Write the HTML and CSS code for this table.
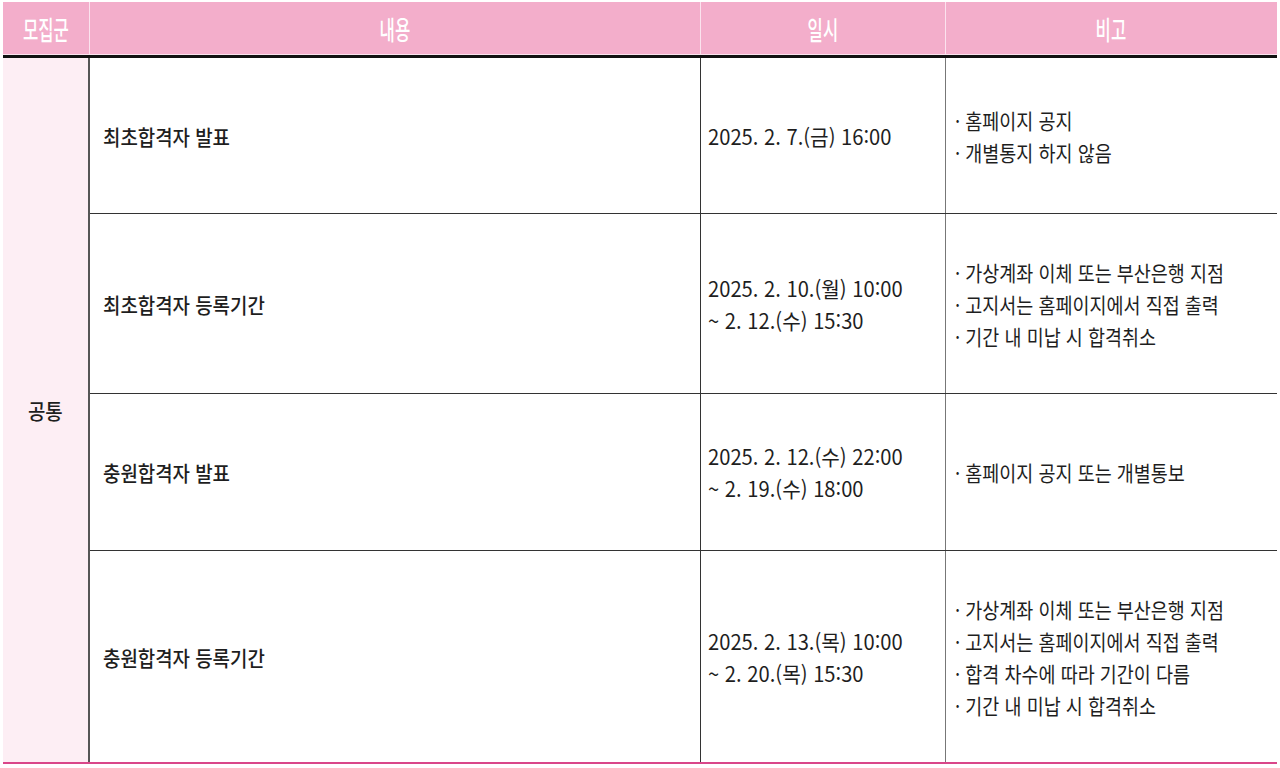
FILE: index.html
```html
<!DOCTYPE html>
<html lang="ko">
<head>
<meta charset="utf-8">
<link rel="stylesheet" href="styles.css">
</head>
<body>
<div class="wrap">
<table class="sched">
  <colgroup>
    <col class="c1"><col class="c2"><col class="c3"><col class="c4">
  </colgroup>
  <thead>
    <tr>
      <th><span class="cz">모집군</span></th>
      <th><span class="cz">내용</span></th>
      <th><span class="cz">일시</span></th>
      <th><span class="cz">비고</span></th>
    </tr>
  </thead>
  <tbody>
    <tr class="r1">
      <td class="grp" rowspan="4"><span class="cz">공통</span></td>
      <td class="title"><span class="cz">최초합격자 발표</span></td>
      <td class="date"><span class="cz">2025. 2. 7.(금) 16:00</span></td>
      <td class="note"><span class="cz">· 홈페이지 공지<br>· 개별통지 하지 않음</span></td>
    </tr>
    <tr class="r2">
      <td class="title"><span class="cz">최초합격자 등록기간</span></td>
      <td class="date"><span class="cz">2025. 2. 10.(월) 10:00<br>~ 2. 12.(수) 15:30</span></td>
      <td class="note"><span class="cz">· 가상계좌 이체 또는 부산은행 지점<br>· 고지서는 홈페이지에서 직접 출력<br>· 기간 내 미납 시 합격취소</span></td>
    </tr>
    <tr class="r3">
      <td class="title"><span class="cz">충원합격자 발표</span></td>
      <td class="date"><span class="cz">2025. 2. 12.(수) 22:00<br>~ 2. 19.(수) 18:00</span></td>
      <td class="note"><span class="cz">· 홈페이지 공지 또는 개별통보</span></td>
    </tr>
    <tr class="r4">
      <td class="title"><span class="cz">충원합격자 등록기간</span></td>
      <td class="date"><span class="cz">2025. 2. 13.(목) 10:00<br>~ 2. 20.(목) 15:30</span></td>
      <td class="note"><span class="cz">· 가상계좌 이체 또는 부산은행 지점<br>· 고지서는 홈페이지에서 직접 출력<br>· 합격 차수에 따라 기간이 다름<br>· 기간 내 미납 시 합격취소</span></td>
    </tr>
  </tbody>
</table>
</div>
</body>
</html>
```

FILE: styles.css
```css
html, body {
  margin: 0;
  padding: 0;
  background: #ffffff;
}
.wrap {
  padding: 2px 3px 0 3px;
}
.sched {
  width: 1274px;
  border-collapse: collapse;
  table-layout: fixed;
  font-family: "Noto Sans CJK KR", "Noto Sans", sans-serif;
  color: #1e1e1e;
  font-size: 21px;
}
.c1 { width: 86px; }
.c2 { width: 611px; }
.c3 { width: 245px; }
.c4 { width: 332px; }

.sched th {
  background: #f3aecb;
  color: #ffffff;
  font-weight: 500;
  font-size: 26px;
  line-height: 30px;
  height: 53px;
  padding: 0;
  border-left: 1px solid #fbe3ee;
  border-bottom: 3px solid #111111;
  text-align: center;
  vertical-align: middle;
  box-shadow: inset 0 -1px 0 #fbe3ee;
}
.sched th:first-child { border-left: none; }

.sched td {
  padding: 0;
  vertical-align: middle;
  border-bottom: 1px solid #333333;
  border-left: 1px solid #333333;
  line-height: 32px;
}
.sched td.grp {
  background: #fdeef4;
  border-left: none;
  border-right: 2px solid #555555;
  border-bottom: 2px solid #d9478a;
  text-align: center;
  font-weight: 500;
}
.sched tr.r4 td { border-bottom: 2px solid #d9478a; }
.sched td.note { border-left: 1px solid #777777; }

.r1 td { height: 155px; }
.r2 td { height: 179px; }
.r3 td { height: 156px; }
.r4 td { height: 211px; }

.title { padding-left: 13px !important; font-weight: 500; }
.date { padding-left: 7px !important; }
.note { padding-left: 9px !important; }

.cz {
  display: inline-block;
  transform: scaleX(0.86);
  transform-origin: left center;
  white-space: nowrap;
}
th .cz { transform: scaleX(0.64); transform-origin: center center; }
.grp .cz { transform: scaleX(0.9); transform-origin: center center; }
.title .cz { transform: scaleX(0.9); }
.note .cz { transform: scaleX(0.88); line-height: 32px; }
.date .cz { transform: scaleX(0.96); }
```
